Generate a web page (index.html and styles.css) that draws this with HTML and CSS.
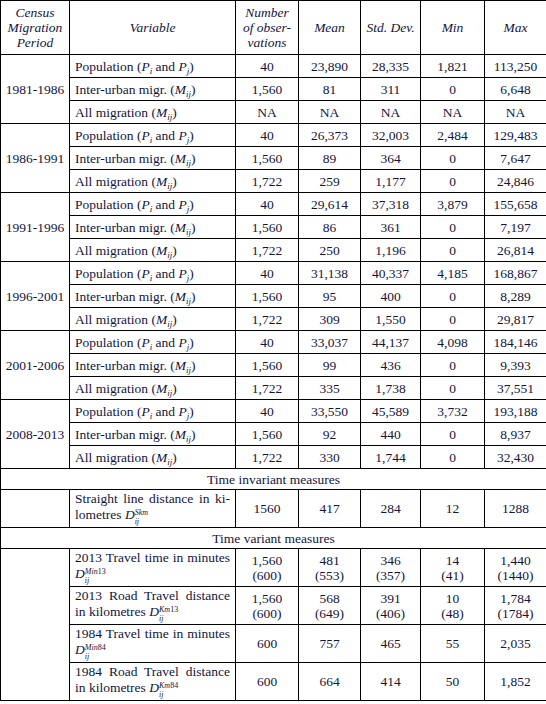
FILE: index.html
```html
<!DOCTYPE html>
<html>
<head>
<meta charset="utf-8">
<link rel="stylesheet" href="styles.css">
</head>
<body>
<table class="stats">
<colgroup>
<col class="c1"><col class="c2"><col class="c3"><col class="c4"><col class="c5"><col class="c6"><col class="c7">
</colgroup>
<thead>
<tr class="hdr">
<th>Census<br>Migration<br>Period</th>
<th>Variable</th>
<th>Number<br>of obser-<br>vations</th>
<th>Mean</th>
<th>Std. Dev.</th>
<th>Min</th>
<th>Max</th>
</tr>
</thead>
<tbody>
<tr class="r"><td rowspan="3" class="per">1981-1986</td><td class="var">Population (<i>P</i><sub>i</sub> and <i>P</i><sub>j</sub>)</td><td>40</td><td>23,890</td><td>28,335</td><td>1,821</td><td>113,250</td></tr>
<tr class="r"><td class="var">Inter-urban migr. (<i>M</i><sub>ij</sub>)</td><td>1,560</td><td>81</td><td>311</td><td>0</td><td>6,648</td></tr>
<tr class="r"><td class="var">All migration (<i>M</i><sub>ij</sub>)</td><td>NA</td><td>NA</td><td>NA</td><td>NA</td><td>NA</td></tr>

<tr class="r"><td rowspan="3" class="per">1986-1991</td><td class="var">Population (<i>P</i><sub>i</sub> and <i>P</i><sub>j</sub>)</td><td>40</td><td>26,373</td><td>32,003</td><td>2,484</td><td>129,483</td></tr>
<tr class="r"><td class="var">Inter-urban migr. (<i>M</i><sub>ij</sub>)</td><td>1,560</td><td>89</td><td>364</td><td>0</td><td>7,647</td></tr>
<tr class="r"><td class="var">All migration (<i>M</i><sub>ij</sub>)</td><td>1,722</td><td>259</td><td>1,177</td><td>0</td><td>24,846</td></tr>

<tr class="r"><td rowspan="3" class="per">1991-1996</td><td class="var">Population (<i>P</i><sub>i</sub> and <i>P</i><sub>j</sub>)</td><td>40</td><td>29,614</td><td>37,318</td><td>3,879</td><td>155,658</td></tr>
<tr class="r"><td class="var">Inter-urban migr. (<i>M</i><sub>ij</sub>)</td><td>1,560</td><td>86</td><td>361</td><td>0</td><td>7,197</td></tr>
<tr class="r"><td class="var">All migration (<i>M</i><sub>ij</sub>)</td><td>1,722</td><td>250</td><td>1,196</td><td>0</td><td>26,814</td></tr>

<tr class="r"><td rowspan="3" class="per">1996-2001</td><td class="var">Population (<i>P</i><sub>i</sub> and <i>P</i><sub>j</sub>)</td><td>40</td><td>31,138</td><td>40,337</td><td>4,185</td><td>168,867</td></tr>
<tr class="r"><td class="var">Inter-urban migr. (<i>M</i><sub>ij</sub>)</td><td>1,560</td><td>95</td><td>400</td><td>0</td><td>8,289</td></tr>
<tr class="r"><td class="var">All migration (<i>M</i><sub>ij</sub>)</td><td>1,722</td><td>309</td><td>1,550</td><td>0</td><td>29,817</td></tr>

<tr class="r"><td rowspan="3" class="per">2001-2006</td><td class="var">Population (<i>P</i><sub>i</sub> and <i>P</i><sub>j</sub>)</td><td>40</td><td>33,037</td><td>44,137</td><td>4,098</td><td>184,146</td></tr>
<tr class="r"><td class="var">Inter-urban migr. (<i>M</i><sub>ij</sub>)</td><td>1,560</td><td>99</td><td>436</td><td>0</td><td>9,393</td></tr>
<tr class="r"><td class="var">All migration (<i>M</i><sub>ij</sub>)</td><td>1,722</td><td>335</td><td>1,738</td><td>0</td><td>37,551</td></tr>

<tr class="r"><td rowspan="3" class="per">2008-2013</td><td class="var">Population (<i>P</i><sub>i</sub> and <i>P</i><sub>j</sub>)</td><td>40</td><td>33,550</td><td>45,589</td><td>3,732</td><td>193,188</td></tr>
<tr class="r"><td class="var">Inter-urban migr. (<i>M</i><sub>ij</sub>)</td><td>1,560</td><td>92</td><td>440</td><td>0</td><td>8,937</td></tr>
<tr class="r"><td class="var">All migration (<i>M</i><sub>ij</sub>)</td><td>1,722</td><td>330</td><td>1,744</td><td>0</td><td>32,430</td></tr>

<tr class="sec"><td colspan="7">Time invariant measures</td></tr>
<tr class="r2"><td></td><td class="var"><span class="jl">Straight line distance in ki-</span>lometres <i>D</i><span class="ss"><span class="sp">Skm</span><span class="sb">ij</span></span></td><td>1560</td><td>417</td><td>284</td><td>12</td><td>1288</td></tr>
<tr class="sec"><td colspan="7">Time variant measures</td></tr>
<tr class="r2"><td rowspan="4"></td><td class="var"><span class="jl">2013 Travel time in minutes</span><i>D</i><span class="ss"><span class="sp">Min<span class="up">13</span></span><span class="sb">ij</span></span></td><td>1,560<br>(600)</td><td>481<br>(553)</td><td>346<br>(357)</td><td>14<br>(41)</td><td>1,440<br>(1440)</td></tr>
<tr class="r2"><td class="var"><span class="jl">2013 Road Travel distance</span>in kilometres <i>D</i><span class="ss"><span class="sp">Km<span class="up">13</span></span><span class="sb">ij</span></span></td><td>1,560<br>(600)</td><td>568<br>(649)</td><td>391<br>(406)</td><td>10<br>(48)</td><td>1,784<br>(1784)</td></tr>
<tr class="r2"><td class="var"><span class="jl">1984 Travel time in minutes</span><i>D</i><span class="ss"><span class="sp">Min<span class="up">84</span></span><span class="sb">ij</span></span></td><td>600</td><td>757</td><td>465</td><td>55</td><td>2,035</td></tr>
<tr class="r2"><td class="var"><span class="jl">1984 Road Travel distance</span>in kilometres <i>D</i><span class="ss"><span class="sp">Km<span class="up">84</span></span><span class="sb">ij</span></span></td><td>600</td><td>664</td><td>414</td><td>50</td><td>1,852</td></tr>
</tbody>
</table>
</body>
</html>
```

FILE: styles.css
```css
html, body {
  margin: 0;
  padding: 0;
  background: #ffffff;
}

.stats {
  border-collapse: collapse;
  table-layout: fixed;
  width: 546px;
  font-family: "Liberation Serif", "Times New Roman", serif;
  font-size: 13.5px;
  line-height: 15px;
  color: #15153a;
}

.c1 { width: 69px; }
.c2 { width: 166px; }
.c3 { width: 63px; }
.c4 { width: 62px; }
.c5 { width: 60px; }
.c6 { width: 64px; }
.c7 { width: 62px; }

.stats th,
.stats td {
  border: 1px solid #000;
  padding: 0 2px;
  text-align: center;
  vertical-align: middle;
}

.stats th {
  font-weight: normal;
  font-style: italic;
}

.hdr { height: 54px; }
.r { height: 23px; }
.r2 { height: 38px; }
.sec { height: 21px; }

.stats td.var {
  text-align: justify;
  padding: 0 5px 0 5px;
}

.stats td.per {
  padding: 0 3px;
}

.jl {
  display: block;
  text-align: justify;
  text-align-last: justify;
  line-height: 15px;
}

.sd {
  display: block;
}

sub {
  font-size: 9px;
  font-style: italic;
  line-height: 0;
  vertical-align: -3px;
}

.ss {
  display: inline-block;
  vertical-align: -5px;
  font-size: 8px;
  line-height: 9px;
  font-style: italic;
  text-align: left;
  margin-top: 2px;
}

.sp, .sb {
  display: block;
}

.up {
  font-style: normal;
}
```
